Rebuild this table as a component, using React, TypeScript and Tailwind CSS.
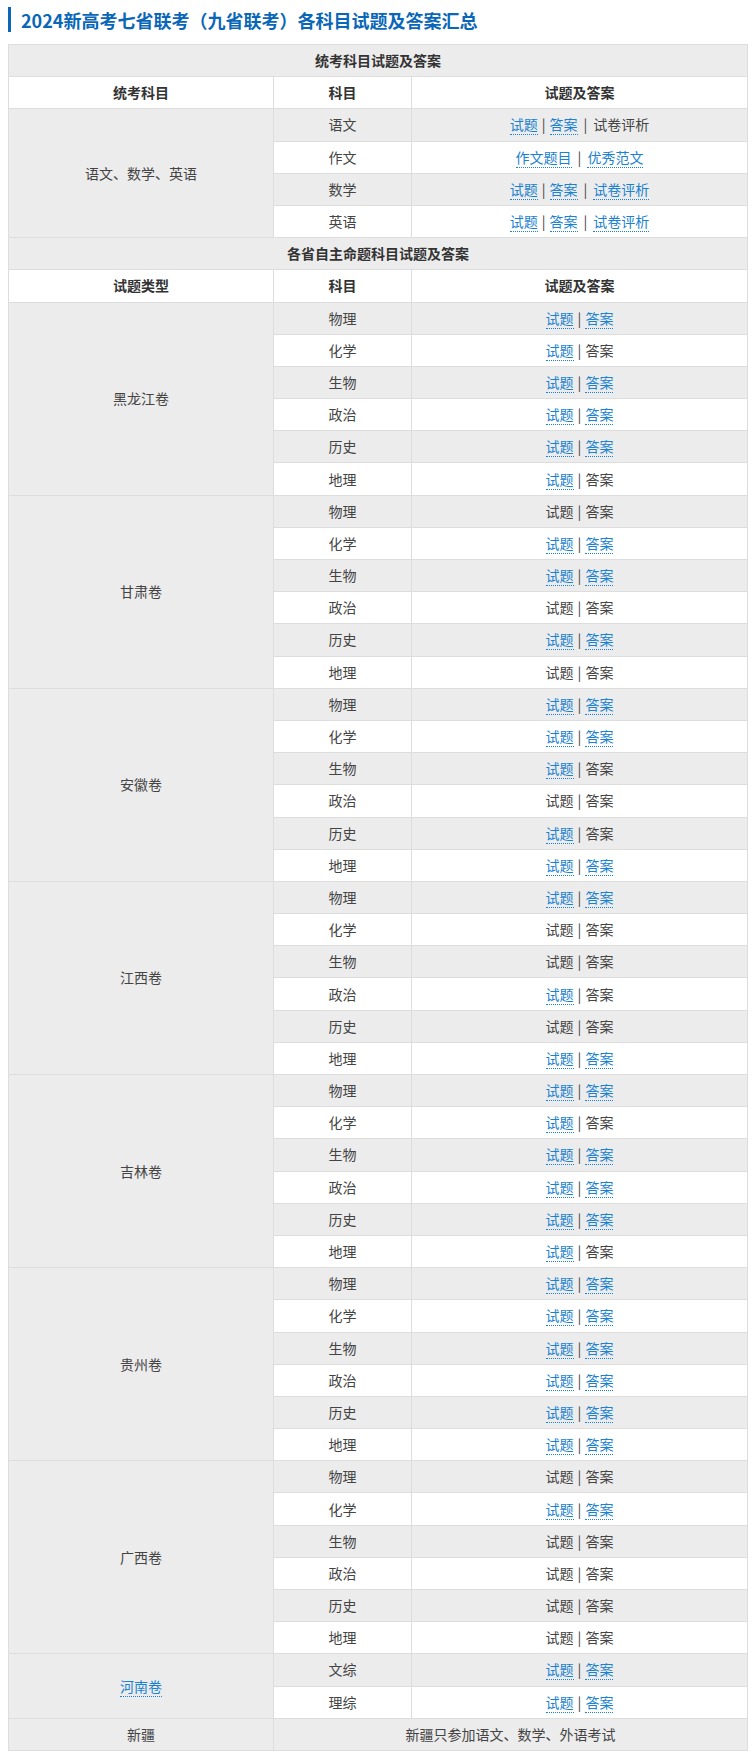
import React from "react";

interface Province {
  name: string;
  link?: boolean;
  rows: [string, string][];
}

// "1" = 有链接, "0" = 普通文字
const provinces: Province[] = [
  {
    name: "黑龙江卷",
    rows: [["物理", "11"], ["化学", "10"], ["生物", "11"], ["政治", "11"], ["历史", "11"], ["地理", "10"]],
  },
  {
    name: "甘肃卷",
    rows: [["物理", "00"], ["化学", "11"], ["生物", "11"], ["政治", "00"], ["历史", "11"], ["地理", "00"]],
  },
  {
    name: "安徽卷",
    rows: [["物理", "11"], ["化学", "11"], ["生物", "10"], ["政治", "00"], ["历史", "10"], ["地理", "11"]],
  },
  {
    name: "江西卷",
    rows: [["物理", "11"], ["化学", "00"], ["生物", "00"], ["政治", "10"], ["历史", "00"], ["地理", "11"]],
  },
  {
    name: "吉林卷",
    rows: [["物理", "11"], ["化学", "10"], ["生物", "11"], ["政治", "11"], ["历史", "11"], ["地理", "10"]],
  },
  {
    name: "贵州卷",
    rows: [["物理", "11"], ["化学", "11"], ["生物", "11"], ["政治", "11"], ["历史", "11"], ["地理", "11"]],
  },
  {
    name: "广西卷",
    rows: [["物理", "00"], ["化学", "11"], ["生物", "00"], ["政治", "00"], ["历史", "00"], ["地理", "00"]],
  },
  {
    name: "河南卷",
    link: true,
    rows: [["文综", "11"], ["理综", "11"]],
  },
];

const GRAY = "bg-[#ececec]";
const WHITE = "bg-white";
const td = "h-[32.2px] p-0 border border-[#dddddd] text-center align-middle";

const L: React.FC<{ children: React.ReactNode; on?: boolean }> = ({ children, on = true }) =>
  on ? (
    <a className="text-[#1a82d0] border-b border-dotted border-[#1a82d0] cursor-pointer">{children}</a>
  ) : (
    <span>{children}</span>
  );

const Sep: React.FC<{ wide?: boolean }> = ({ wide }) => (
  <span className={wide ? "mx-[6px]" : "mx-[4px]"}>|</span>
);

export default function App() {
  // 行的序号决定背景颜色（奇数行灰色）
  let rowNo = 0;
  const bg = () => {
    rowNo += 1;
    return rowNo % 2 === 1 ? GRAY : WHITE;
  };

  const r1 = bg();
  const r2 = bg();
  const r3 = bg();
  const r4 = bg();
  const r5 = bg();
  const r6 = bg();
  const r7 = bg();
  const r8 = bg();

  const provinceRows = provinces.map((p) =>
    p.rows.map(([subject, flags], i) => ({ subject, flags, i, cls: bg() }))
  );
  const rLast = bg();

  return (
    <div
      className="bg-white text-[14px] text-[#444] pb-[6px]"
      style={{ fontFamily: '"Noto Sans CJK SC", "Microsoft YaHei", sans-serif' }}
    >
      <h1 className="mt-[7px] ml-[8px] h-[25px] flex items-center border-l-[3.5px] border-[#0a67b8] pl-[10px] text-[18px] font-bold text-[#0a67b8] leading-none">
        2024新高考七省联考（九省联考）各科目试题及答案汇总
      </h1>

      <table className="mt-[12px] ml-[8px] w-[740px] border-collapse table-fixed">
        <colgroup>
          <col className="w-[265px]" />
          <col className="w-[138px]" />
          <col />
        </colgroup>
        <tbody>
          <tr className={r1}>
            <td colSpan={3} className={`${td} font-bold text-[#333]`}>
              统考科目试题及答案
            </td>
          </tr>
          <tr className={r2}>
            <td className={`${td} font-bold text-[#333]`}>统考科目</td>
            <td className={`${td} font-bold text-[#333]`}>科目</td>
            <td className={`${td} font-bold text-[#333]`}>试题及答案</td>
          </tr>
          <tr className={r3}>
            <td rowSpan={4} className={`${td} ${GRAY}`}>
              语文、数学、英语
            </td>
            <td className={td}>语文</td>
            <td className={td}>
              <L>试题</L>
              <Sep />
              <L>答案</L>
              <Sep wide />
              <L on={false}>试卷评析</L>
            </td>
          </tr>
          <tr className={r4}>
            <td className={td}>作文</td>
            <td className={td}>
              <L>作文题目</L>
              <Sep wide />
              <L>优秀范文</L>
            </td>
          </tr>
          <tr className={r5}>
            <td className={td}>数学</td>
            <td className={td}>
              <L>试题</L>
              <Sep />
              <L>答案</L>
              <Sep wide />
              <L>试卷评析</L>
            </td>
          </tr>
          <tr className={r6}>
            <td className={td}>英语</td>
            <td className={td}>
              <L>试题</L>
              <Sep />
              <L>答案</L>
              <Sep wide />
              <L>试卷评析</L>
            </td>
          </tr>
          <tr className={r7}>
            <td colSpan={3} className={`${td} font-bold text-[#333]`}>
              各省自主命题科目试题及答案
            </td>
          </tr>
          <tr className={r8}>
            <td className={`${td} font-bold text-[#333]`}>试题类型</td>
            <td className={`${td} font-bold text-[#333]`}>科目</td>
            <td className={`${td} font-bold text-[#333]`}>试题及答案</td>
          </tr>

          {provinces.map((p, pi) =>
            provinceRows[pi].map((row) => (
              <tr key={p.name + row.subject} className={row.cls}>
                {row.i === 0 && (
                  <td rowSpan={p.rows.length} className={`${td} ${GRAY}`}>
                    {p.link ? <L>{p.name}</L> : p.name}
                  </td>
                )}
                <td className={td}>{row.subject}</td>
                <td className={td}>
                  <L on={row.flags[0] === "1"}>试题</L>
                  <Sep />
                  <L on={row.flags[1] === "1"}>答案</L>
                </td>
              </tr>
            ))
          )}

          <tr className={rLast}>
            <td className={td}>新疆</td>
            <td colSpan={2} className={td}>
              新疆只参加语文、数学、外语考试
            </td>
          </tr>
        </tbody>
      </table>
    </div>
  );
}
